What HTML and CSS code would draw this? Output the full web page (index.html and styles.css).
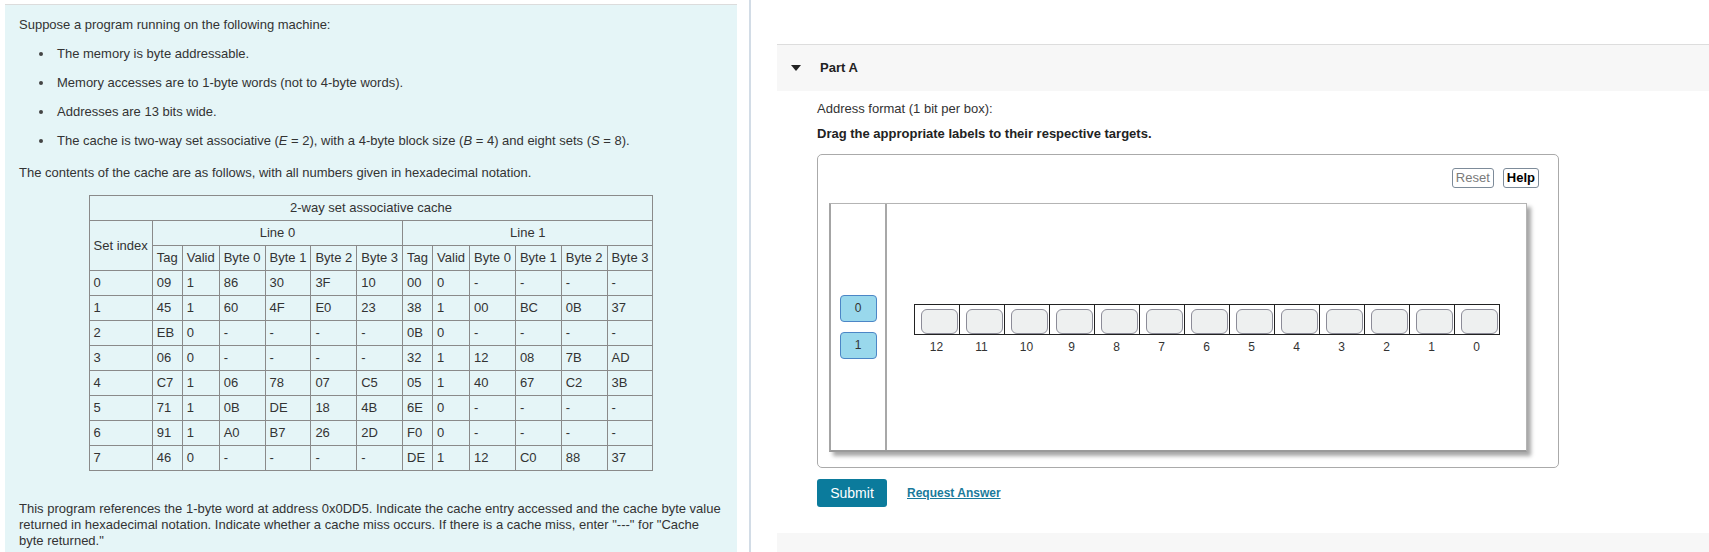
FILE: index.html
```html
<!DOCTYPE html>
<html>
<head>
<meta charset="utf-8">
<link rel="stylesheet" href="styles.css">
</head>
<body>
<div class="page">
  <div class="intro">
    <p class="lead">Suppose a program running on the following machine:</p>
    <ul class="facts">
      <li>The memory is byte addressable.</li>
      <li>Memory accesses are to 1-byte words (not to 4-byte words).</li>
      <li>Addresses are 13 bits wide.</li>
      <li>The cache is two-way set associative (<i>E</i> = 2), with a 4-byte block size (<i>B</i> = 4) and eight sets (<i>S</i> = 8).</li>
    </ul>
    <p class="lead">The contents of the cache are as follows, with all numbers given in hexadecimal notation.</p>
    <table class="cache">
      <tr><th colspan="13" class="c">2-way set associative cache</th></tr>
      <tr><th rowspan="2" class="set">Set index</th><th colspan="6" class="c">Line 0</th><th colspan="6" class="c">Line 1</th></tr>
      <tr><th>Tag</th><th>Valid</th><th>Byte 0</th><th>Byte 1</th><th>Byte 2</th><th>Byte 3</th><th>Tag</th><th>Valid</th><th>Byte 0</th><th>Byte 1</th><th>Byte 2</th><th>Byte 3</th></tr>
      <tr><td>0</td><td>09</td><td>1</td><td>86</td><td>30</td><td>3F</td><td>10</td><td>00</td><td>0</td><td>-</td><td>-</td><td>-</td><td>-</td></tr>
      <tr><td>1</td><td>45</td><td>1</td><td>60</td><td>4F</td><td>E0</td><td>23</td><td>38</td><td>1</td><td>00</td><td>BC</td><td>0B</td><td>37</td></tr>
      <tr><td>2</td><td>EB</td><td>0</td><td>-</td><td>-</td><td>-</td><td>-</td><td>0B</td><td>0</td><td>-</td><td>-</td><td>-</td><td>-</td></tr>
      <tr><td>3</td><td>06</td><td>0</td><td>-</td><td>-</td><td>-</td><td>-</td><td>32</td><td>1</td><td>12</td><td>08</td><td>7B</td><td>AD</td></tr>
      <tr><td>4</td><td>C7</td><td>1</td><td>06</td><td>78</td><td>07</td><td>C5</td><td>05</td><td>1</td><td>40</td><td>67</td><td>C2</td><td>3B</td></tr>
      <tr><td>5</td><td>71</td><td>1</td><td>0B</td><td>DE</td><td>18</td><td>4B</td><td>6E</td><td>0</td><td>-</td><td>-</td><td>-</td><td>-</td></tr>
      <tr><td>6</td><td>91</td><td>1</td><td>A0</td><td>B7</td><td>26</td><td>2D</td><td>F0</td><td>0</td><td>-</td><td>-</td><td>-</td><td>-</td></tr>
      <tr><td>7</td><td>46</td><td>0</td><td>-</td><td>-</td><td>-</td><td>-</td><td>DE</td><td>1</td><td>12</td><td>C0</td><td>88</td><td>37</td></tr>
    </table>
    <p class="question">This program references the 1-byte word at address 0x0DD5. Indicate the cache entry accessed and the cache byte value returned in hexadecimal notation. Indicate whether a cache miss occurs. If there is a cache miss, enter "---" for "Cache byte returned."</p>
  </div>
  <div class="gutter"></div>
  <div class="divider"></div>
  <div class="work">
    <div class="part-head"><span class="caret"></span><span class="part-title">Part A</span></div>
    <div class="part-body">
      <p class="instr">Address format (1 bit per box):</p>
      <p class="instr bold">Drag the appropriate labels to their respective targets.</p>
      <div class="dnd">
        <div class="toolbar">
          <button class="tbtn reset">Reset</button>
          <button class="tbtn help">Help</button>
        </div>
        <div class="board">
          <div class="tray">
            <div class="chip">0</div>
            <div class="chip">1</div>
          </div>
          <div class="sep"></div>
          <div class="area">
            <div class="bits">
              <div class="bit"><div class="slot"></div></div>
              <div class="bit"><div class="slot"></div></div>
              <div class="bit"><div class="slot"></div></div>
              <div class="bit"><div class="slot"></div></div>
              <div class="bit"><div class="slot"></div></div>
              <div class="bit"><div class="slot"></div></div>
              <div class="bit"><div class="slot"></div></div>
              <div class="bit"><div class="slot"></div></div>
              <div class="bit"><div class="slot"></div></div>
              <div class="bit"><div class="slot"></div></div>
              <div class="bit"><div class="slot"></div></div>
              <div class="bit"><div class="slot"></div></div>
              <div class="bit"><div class="slot"></div></div>
            </div>
            <div class="nums">
              <span>12</span><span>11</span><span>10</span><span>9</span><span>8</span><span>7</span><span>6</span><span>5</span><span>4</span><span>3</span><span>2</span><span>1</span><span>0</span>
            </div>
          </div>
        </div>
      </div>
      <div class="actions">
        <button class="submit">Submit</button>
        <a class="request" href="#">Request Answer</a>
      </div>
    </div>
    <div class="part-head next"><span class="caret"></span><span class="part-title">Part B</span></div>
  </div>
</div>
</body>
</html>
```

FILE: styles.css
```css
html, body {
  margin: 0;
  padding: 0;
  overflow: hidden;
  background: #fff;
}
body {
  font-family: "Liberation Sans", Arial, sans-serif;
  font-size: 13px;
  line-height: 16px;
  color: #333;
}
.page {
  display: flex;
  align-items: flex-start;
  height: 552px;
}
.intro {
  width: 732px;
  flex: none;
  box-sizing: border-box;
  margin: 4px 0 0 5px;
  height: 600px;
  border-top: 1px solid #dcdcdc;
  background: #e5f5f7;
  padding: 12px 14px 0 14px;
}
.lead {
  margin: 0 0 13px;
}
.facts {
  margin: 0 0 16px;
  padding-left: 38px;
  list-style: none;
}
.facts li {
  margin-bottom: 13px;
}
.facts li::before {
  content: "";
  display: inline-block;
  width: 4px;
  height: 4px;
  border-radius: 50%;
  background: #444;
  margin: 0 14px 2px -18px;
  vertical-align: middle;
}
.facts li:last-child {
  margin-bottom: 0;
}
.cache {
  border-collapse: collapse;
  margin: 14px auto 0;
  border: 1px solid #444;
}
.cache th, .cache td {
  border: 1px solid #8a8a8a;
  padding: 4px 4px;
  font-weight: normal;
  text-align: left;
  line-height: 16px;
  white-space: nowrap;
}
.cache th.c {
  text-align: center;
}
.cache th.set {
  vertical-align: middle;
}
.question {
  margin: 30px 0 0;
}
.gutter {
  width: 12px;
  flex: none;
}
.divider {
  width: 2px;
  flex: none;
  height: 552px;
  background: #d2dce6;
}
.work {
  flex: 1;
  padding: 44px 0 0 26px;
  min-width: 0;
}
.part-head {
  display: flex;
  align-items: center;
  height: 46px;
  border-top: 1px solid #dddddd;
  background: #f7f7f7;
  padding-left: 14px;
}
.part-head.next {
  margin-top: 26px;
  border-top-color: #f7f7f7;
}
.caret {
  width: 0;
  height: 0;
  border-left: 5px solid transparent;
  border-right: 5px solid transparent;
  border-top: 6px solid #222;
  margin-right: 19px;
}
.part-title {
  font-weight: bold;
  color: #222;
}
.part-body {
  padding-left: 40px;
}
.instr {
  margin: 10px 0 0;
}
.instr.bold {
  margin-top: 9px;
  font-weight: bold;
  color: #222;
}
.dnd {
  margin-top: 12px;
  width: 742px;
  box-sizing: border-box;
  border: 1px solid #aaaaaa;
  border-radius: 5px;
  padding: 13px 19px 15px 11px;
}
.toolbar {
  display: flex;
  justify-content: flex-end;
  gap: 9px;
  margin-bottom: 15px;
}
.tbtn {
  font-family: "Liberation Sans", Arial, sans-serif;
  font-size: 13px;
  line-height: 16px;
  height: 20px;
  padding: 1px 3px;
  background: #fff;
  border: 1px solid #7d8b99;
  border-radius: 3px;
}
.tbtn.reset {
  color: #7a7a7a;
}
.tbtn.help {
  color: #000;
  font-weight: bold;
}
.board {
  display: flex;
  margin-right: 12px;
  height: 249px;
  box-sizing: border-box;
  border: 1px solid #b4b4b4;
  border-left: 2px solid #a4a4a4;
  border-bottom: 2px solid #9a9a9a;
  box-shadow: 4px 4px 4px rgba(0, 0, 0, 0.35);
  background: #fff;
}
.tray {
  width: 54px;
  flex: none;
  display: flex;
  flex-direction: column;
  align-items: center;
  justify-content: center;
  gap: 10px;
}
.chip {
  width: 37px;
  height: 27px;
  box-sizing: border-box;
  background: #99d8ec;
  border: 1px solid #4c86c6;
  border-radius: 4px;
  font-size: 12px;
  line-height: 25px;
  text-align: center;
  color: #333;
}
.sep {
  width: 2px;
  flex: none;
  background: #a8a8a8;
}
.area {
  flex: 1;
  display: flex;
  flex-direction: column;
  align-items: center;
  justify-content: center;
  padding-top: 4px;
}
.bits {
  display: flex;
}
.bit {
  width: 46px;
  height: 31px;
  box-sizing: border-box;
  border: 1px solid #222;
  margin-left: -1px;
  display: flex;
  align-items: flex-end;
  padding-left: 6px;
}
.bit:first-child {
  margin-left: 0;
}
.slot {
  width: 37px;
  height: 25px;
  box-sizing: border-box;
  background: #eef0f0;
  border: 1.5px solid #8c8c98;
  border-radius: 6px;
}
.nums {
  display: flex;
  margin-top: 4px;
}
.nums span {
  width: 46px;
  margin-left: -1px;
  text-align: center;
  font-size: 12px;
  line-height: 16px;
  color: #333;
}
.nums span:first-child {
  margin-left: 0;
}
.actions {
  display: flex;
  align-items: center;
  margin-top: 11px;
}
.submit {
  width: 70px;
  height: 28px;
  background: #0b7b9c;
  color: #fff;
  border: none;
  border-radius: 3px;
  font-family: "Liberation Sans", Arial, sans-serif;
  font-size: 14px;
  padding: 0;
}
.request {
  margin-left: 20px;
  color: #1a7a9b;
  font-weight: bold;
  font-size: 12px;
  text-decoration: underline;
}
```
